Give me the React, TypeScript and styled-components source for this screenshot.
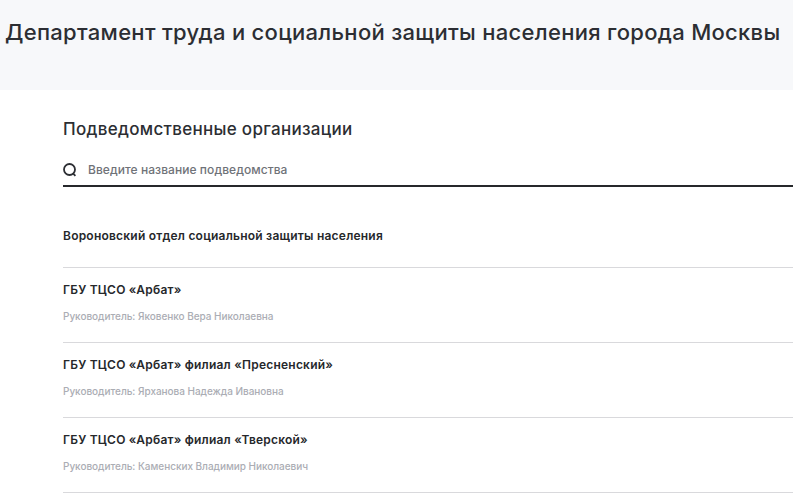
import { createGlobalStyle, styled } from "styled-components";

const GlobalStyle = createGlobalStyle`
  html, body {
    margin: 0;
    padding: 0;
    background: #fff;
    overflow: hidden;
  }
  body {
    font-family: "Inter", "Liberation Sans", sans-serif;
  }
`;

const organizations = [
  { name: "ГБУ ТЦСО «Арбат»", head: "Руководитель: Яковенко Вера Николаевна" },
  { name: "ГБУ ТЦСО «Арбат» филиал «Пресненский»", head: "Руководитель: Ярханова Надежда Ивановна" },
  { name: "ГБУ ТЦСО «Арбат» филиал «Тверской»", head: "Руководитель: Каменских Владимир Николаевич" },
];

export default function App() {
  return (
    <Page>
      <GlobalStyle />
      <Header>
        <Title>Департамент труда и социальной защиты населения города Москвы</Title>
      </Header>
      <Content>
        <SectionTitle>Подведомственные организации</SectionTitle>
        <SearchBar>
          <svg width="14" height="14" viewBox="0 0 14 14" fill="none">
            <circle cx="6.5" cy="6.5" r="5.5" stroke="#2c2e33" strokeWidth="1.8" />
            <path d="M10 10.4L12.4 12.8" stroke="#2c2e33" strokeWidth="1.8" />
          </svg>
          <SearchText>Введите название подведомства</SearchText>
        </SearchBar>
        <FirstRow>
          <OrgName>Вороновский отдел социальной защиты населения</OrgName>
        </FirstRow>
        {organizations.map((org) => (
          <OrgRow key={org.name}>
            <OrgName>{org.name}</OrgName>
            <OrgHead>{org.head}</OrgHead>
          </OrgRow>
        ))}
      </Content>
    </Page>
  );
}

const Page = styled.div`
  width: 793px;
  height: 496px;
  overflow: hidden;
`;

const Header = styled.div`
  height: 90px;
  background: #f7f8fa;
  padding: 18px 0 0 5px;
  box-sizing: border-box;
`;

const Title = styled.h1`
  margin: 0;
  font-size: 22px;
  line-height: 28px;
  font-weight: 500;
  letter-spacing: 0.3px;
  color: #2c2e33;
  white-space: nowrap;
`;

const Content = styled.div`
  padding: 29px 0 0 63px;
`;

const SectionTitle = styled.h2`
  margin: 0;
  font-size: 17px;
  line-height: 20px;
  font-weight: 500;
  letter-spacing: 0.3px;
  color: #2c2e33;
`;

const SearchBar = styled.div`
  display: flex;
  align-items: center;
  gap: 11px;
  height: 31px;
  margin-top: 12px;
  padding-top: 3px;
  border-bottom: 2px solid #26282b;
`;

const SearchText = styled.span`
  font-size: 12px;
  font-weight: 500;
  letter-spacing: 0.06px;
  color: #6f7278;
`;

const FirstRow = styled.div`
  padding: 41px 0 23px;
  border-bottom: 1px solid #d9d9dc;
`;

const OrgRow = styled.div`
  padding: 14px 0 19px;
  border-bottom: 1px solid #d9d9dc;
`;

const OrgName = styled.div`
  font-size: 12px;
  line-height: 16px;
  font-weight: 600;
  letter-spacing: 0.22px;
  color: #26282b;
`;

const OrgHead = styled.div`
  margin-top: 11px;
  font-size: 10px;
  line-height: 14px;
  font-weight: 500;
  letter-spacing: -0.03px;
  color: #abadb4;
`;
